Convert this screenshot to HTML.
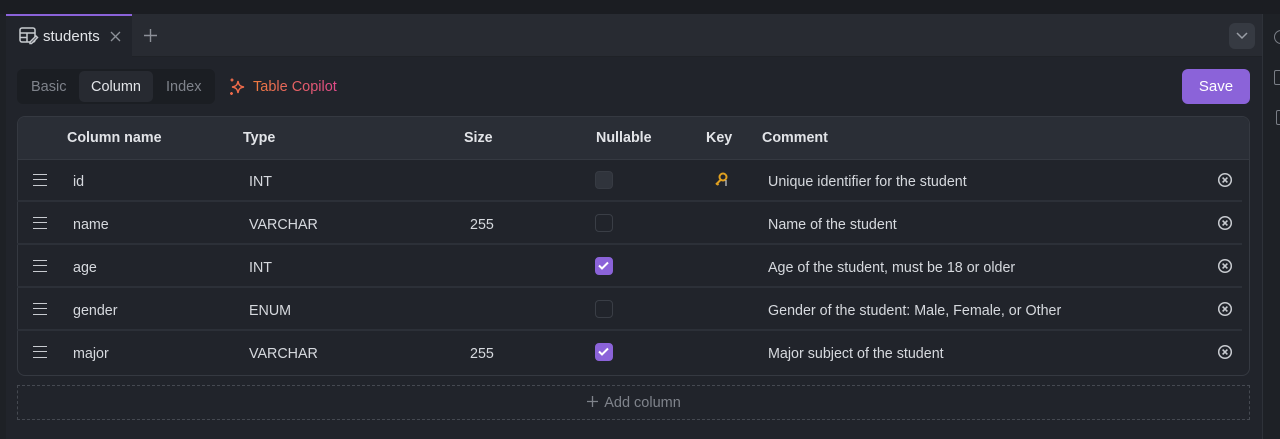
<!DOCTYPE html>
<html><head><style>
*{box-sizing:border-box;margin:0;padding:0}
body{width:1280px;height:439px;overflow:hidden;background:#21242b;font-family:"Liberation Sans",sans-serif;color:#d6d9de;position:relative;font-size:14px}
.abs{position:absolute}
.row{position:absolute;left:17px;width:1225px;height:43px;border-bottom:2px solid #2c3038;font-size:14.3px}
.row span{position:absolute;top:15px}
.cb{position:absolute;left:578px;top:12px;width:18px;height:18px;border-radius:4px;border:1.5px solid #3a3e46}
.cb.f{background:#30343c;border-color:#373b43}
.cb.on{background:#8b63d9;border-color:#8b63d9}
.del{position:absolute;left:1200px;top:13px}
.hb{position:absolute;left:16px;top:15px;width:14px;height:12px;border-top:1.5px solid #c8cbd0;border-bottom:1.5px solid #c8cbd0}
.hb:after{content:"";position:absolute;left:0;right:0;top:4px;border-top:1.5px solid #c8cbd0}
</style></head><body>
<svg width="0" height="0" style="position:absolute"><symbol id="x" viewBox="0 0 16 16"><circle cx="8" cy="8" r="6.3" stroke="#c8cbd0" stroke-width="1.5" fill="none"/><path d="M5.6 5.6l4.8 4.8M10.4 5.6l-4.8 4.8" stroke="#c8cbd0" stroke-width="1.6"/></symbol></svg>
<div class="abs" style="left:0;top:0;width:1280px;height:14px;background:#1b1d22"></div>
<div class="abs" style="left:0;top:14px;width:1262px;height:43px;background:#282b32;border-bottom:1px solid #1f2227"></div>
<div class="abs" style="left:0;top:14px;width:6px;height:425px;background:#1e2126"></div>
<div class="abs" style="left:6px;top:14px;width:126px;height:44px;background:#21242b;border-top:2px solid #8b63d9"></div>
<svg class="abs" style="left:19px;top:27px" width="20" height="18" viewBox="0 0 20 18" fill="none" stroke="#c8cbd0" stroke-width="1.5"><rect x="1" y="1" width="15" height="14" rx="2"/><path d="M1 6h15M1 10.5h7M8 6v9"/><path d="M11 15l6-6 1.5 1.5-6 6H11z" fill="#21242b"/></svg>
<div class="abs" style="left:43px;top:28px;font-size:15px;color:#e2e4e8">students</div>
<svg class="abs" style="left:110px;top:31px" width="11" height="11"><path d="M1 1l9 9M10 1l-9 9" stroke="#8d9199" stroke-width="1.3"/></svg>
<svg class="abs" style="left:143px;top:28px" width="15" height="15"><path d="M7.5 1v13M1 7.5h13" stroke="#8d9199" stroke-width="1.4"/></svg>
<div class="abs" style="left:1229px;top:23px;width:26px;height:26px;border-radius:6px;background:#363a42"></div>
<svg class="abs" style="left:1235px;top:30px" width="14" height="10"><path d="M2 3l5 5 5-5" stroke="#9a9ea6" stroke-width="1.5" fill="none"/></svg>
<div class="abs" style="left:1262px;top:14px;width:18px;height:425px;background:#1e2126;border-left:1px solid #2e3239"></div>
<div class="abs" style="left:1274px;top:30px;width:14px;height:14px;border:1.5px solid #7a7e86;border-radius:50%"></div>
<div class="abs" style="left:1274px;top:70px;width:12px;height:15px;border:1.5px solid #7a7e86;border-radius:2px"></div>
<div class="abs" style="left:1276px;top:110px;width:10px;height:15px;border:1.5px solid #7a7e86;border-radius:2px"></div>

<div class="abs" style="left:17px;top:69px;width:198px;height:35px;background:#1b1e23;border-radius:6px"></div>
<div class="abs" style="left:79px;top:71px;width:74px;height:31px;background:#272a31;border-radius:5px"></div>
<div class="abs" style="left:31px;top:79px;color:#7f838b;font-size:14.5px">Basic</div>
<div class="abs" style="left:91px;top:79px;color:#e2e4e8;font-size:14.5px">Column</div>
<div class="abs" style="left:166px;top:79px;color:#7f838b;font-size:14.5px">Index</div>
<svg class="abs" style="left:228px;top:77px" width="20" height="20" viewBox="0 0 20 20" fill="none" stroke="#ec6a4a" stroke-width="1.5"><path d="M10 4c.6 4 2 5.4 6 6-4 .6-5.4 2-6 6-.6-4-2-5.4-6-6 4-.6 5.4-2 6-6z"/><path d="M4 1.5v3M2.5 3h3M3.5 15v3M2 16.5h3"/></svg>
<div class="abs" style="left:253px;top:79px;font-size:14.5px;background:linear-gradient(90deg,#ee7a3e,#e04a8a);-webkit-background-clip:text;color:transparent">Table Copilot</div>
<div class="abs" style="left:1182px;top:69px;width:68px;height:35px;background:#8b63d9;border-radius:6px;color:#fff;font-size:15px;text-align:center;line-height:35px">Save</div>

<div class="abs" style="left:17px;top:116px;width:1233px;height:260px;border:1px solid #353941;border-radius:8px;overflow:hidden">
<div style="height:43px;background:#2a2e36;border-bottom:1px solid #353941;position:relative;font-weight:bold;color:#e2e4e8;font-size:14.3px">
<span class="abs" style="left:49px;top:13px">Column name</span>
<span class="abs" style="left:225px;top:13px">Type</span>
<span class="abs" style="left:446px;top:13px">Size</span>
<span class="abs" style="left:578px;top:13px">Nullable</span>
<span class="abs" style="left:688px;top:13px">Key</span>
<span class="abs" style="left:744px;top:13px">Comment</span>
</div>
</div>

<div class="row" style="top:159px"><div class="hb"></div><span style="left:56px">id</span><span style="left:232px">INT</span><div class="cb f"></div>
<svg class="abs" style="left:696px;top:12px" width="18" height="18" viewBox="0 0 18 18"><circle cx="10" cy="6" r="3.5" stroke="#e0a020" stroke-width="2" fill="none"/><path d="M8 8.5l-5 5M4 12.5l1.5 1.5" stroke="#e0a020" stroke-width="2"/><path d="M13 9v6" stroke="#c8cbd0" stroke-width="1.2"/></svg>
<span style="left:751px">Unique identifier for the student</span><svg class="del" width="16" height="16"><use href="#x"/></svg></div>
<div class="row" style="top:202px"><div class="hb"></div><span style="left:56px">name</span><span style="left:232px">VARCHAR</span><span style="left:453px">255</span><div class="cb"></div><span style="left:751px">Name of the student</span><svg class="del" width="16" height="16"><use href="#x"/></svg></div>
<div class="row" style="top:245px"><div class="hb"></div><span style="left:56px">age</span><span style="left:232px">INT</span><div class="cb on"><svg width="15" height="15" viewBox="0 0 15 15"><path d="M3 7.5l3 3 6-6" stroke="#fff" stroke-width="2" fill="none"/></svg></div><span style="left:751px">Age of the student, must be 18 or older</span><svg class="del" width="16" height="16"><use href="#x"/></svg></div>
<div class="row" style="top:288px"><div class="hb"></div><span style="left:56px">gender</span><span style="left:232px">ENUM</span><div class="cb"></div><span style="left:751px">Gender of the student: Male, Female, or Other</span><svg class="del" width="16" height="16"><use href="#x"/></svg></div>
<div class="row" style="top:331px;border-bottom:none"><div class="hb"></div><span style="left:56px">major</span><span style="left:232px">VARCHAR</span><span style="left:453px">255</span><div class="cb on"><svg width="15" height="15" viewBox="0 0 15 15"><path d="M3 7.5l3 3 6-6" stroke="#fff" stroke-width="2" fill="none"/></svg></div><span style="left:751px">Major subject of the student</span><svg class="del" width="16" height="16"><use href="#x"/></svg></div>

<div class="abs" style="left:17px;top:385px;width:1233px;height:35px;border:1px dashed #454951;color:#7f838b;text-align:center;line-height:35px;font-size:14.5px"><svg width="13" height="13" style="vertical-align:-1px;margin-right:5px"><path d="M6.5 1v11M1 6.5h11" stroke="#7f838b" stroke-width="1.3"/></svg>Add column</div>
</body></html>
